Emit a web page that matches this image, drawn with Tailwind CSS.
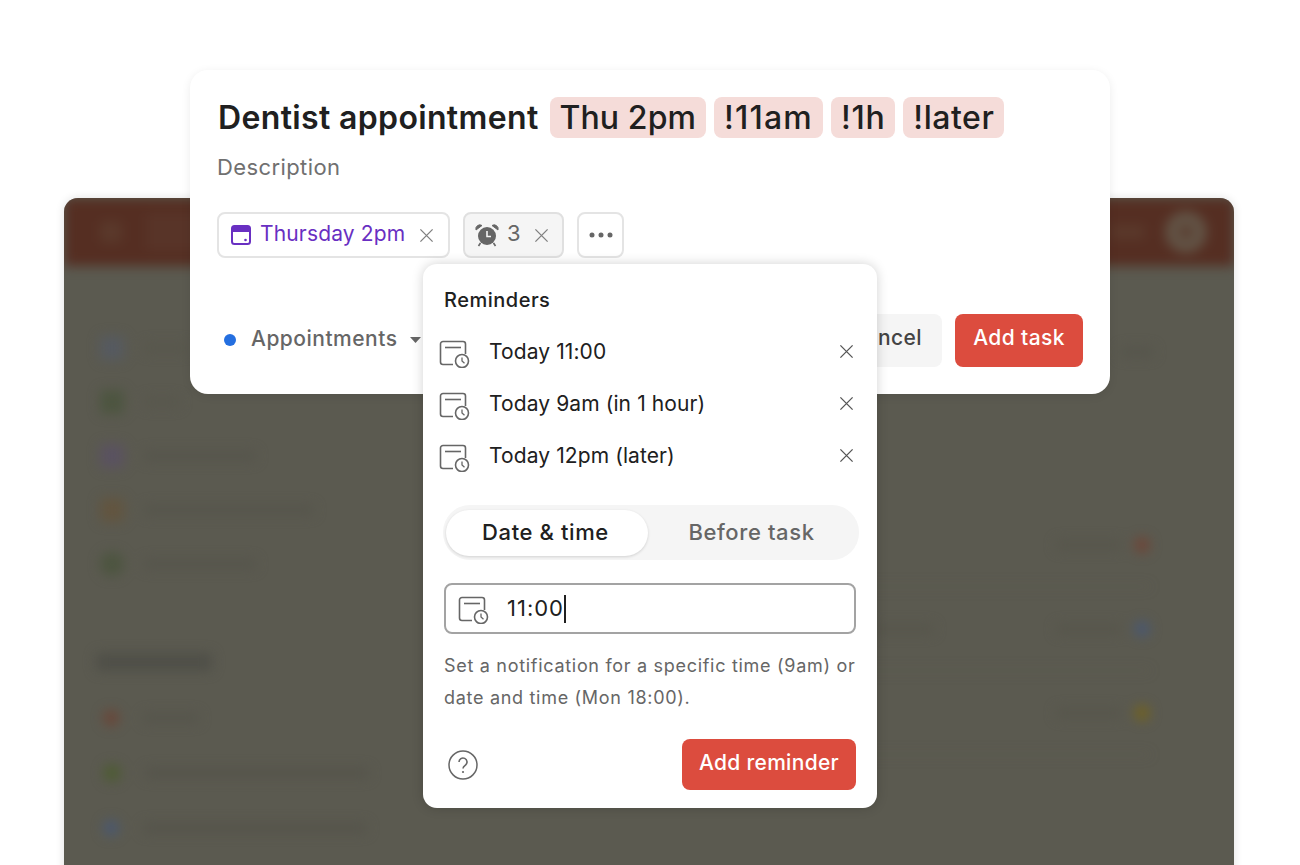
<!DOCTYPE html>
<html lang="en">
<head>
    <meta charset="UTF-8">
    <title>Reminders</title>
    <script src="https://cdn.jsdelivr.net/npm/@tailwindcss/browser@4"></script>
</head>
<body class="bg-white font-['Inter',sans-serif]">
    <svg class="hidden">
        <symbol id="cal-clock" viewBox="0 0 32 28">
            <path d="M14 24.500H4a2.500 2.500 0 0 1-2.500-2.500V4A2.500 2.500 0 0 1 4 1.500h20A2.500 2.500 0 0 1 26.500 4v10" fill="none" stroke="#666" stroke-width="1.600"/>
            <path d="M6 7.500h16" fill="none" stroke="#666" stroke-width="1.600"/>
            <circle cx="23" cy="21" r="6.500" fill="none" stroke="#666" stroke-width="1.600"/>
            <path d="M23 17.500V21l2.500 2.200" fill="none" stroke="#666" stroke-width="1.300"/>
        </symbol>
        <symbol id="close" viewBox="0 0 16 16">
            <path d="M1.500 1.500l13 13M14.500 1.500l-13 13" fill="none" stroke="currentColor" stroke-width="1.400"/>
        </symbol>
    </svg>

    <div class="relative h-[865px] w-[1300px] overflow-hidden">
        <!-- Blurred app window behind the dialog -->
        <div class="absolute left-[64px] top-[198px] h-[700px] w-[1170px] overflow-hidden rounded-t-[14px] bg-[#5b5a50] shadow-[0_0_10px_rgba(0,0,0,0.12)]">
            <div class="flex h-full flex-col blur-[6px]">
                <div class="flex h-[68px] shrink-0 items-center justify-between bg-[#552e22] pl-[36px] pr-[27px]">
                    <div class="flex items-center gap-[24px]">
                        <div class="size-[22px] rounded bg-[#5a392b]"></div>
                        <div class="h-[38px] w-[60px] rounded bg-[#583428]"></div>
                    </div>
                    <div class="flex items-center gap-[20px]">
                        <div class="h-[14px] w-[34px] rounded bg-[#5a392b]"></div>
                        <div class="flex size-[42px] items-center justify-center rounded-full bg-[#625345]">
                            <div class="size-[12px] rounded-full bg-[#58392c]"></div>
                        </div>
                    </div>
                </div>
                <div class="flex flex-1">
                    <div class="flex w-[320px] flex-col pl-[36px] pt-[55px]">
                        <div class="flex h-[54px] items-center gap-[20px]">
                            <div class="size-[24px] rounded bg-[#565a60]"></div>
                            <div class="h-[10px] w-[44px] rounded bg-[#58574d]"></div>
                        </div>
                        <div class="flex h-[54px] items-center gap-[20px]">
                            <div class="size-[24px] rounded bg-[#4d5540]"></div>
                            <div class="h-[10px] w-[36px] rounded bg-[#58574d]"></div>
                        </div>
                        <div class="flex h-[54px] items-center gap-[20px]">
                            <div class="size-[24px] rounded bg-[#5a5260]"></div>
                            <div class="h-[10px] w-[112px] rounded bg-[#56554c]"></div>
                        </div>
                        <div class="flex h-[54px] items-center gap-[20px]">
                            <div class="size-[24px] rounded bg-[#625540]"></div>
                            <div class="h-[10px] w-[170px] rounded bg-[#56554c]"></div>
                        </div>
                        <div class="flex h-[54px] items-center gap-[20px]">
                            <div class="size-[24px] rounded-full bg-[#4d5540]"></div>
                            <div class="h-[10px] w-[112px] rounded bg-[#56554c]"></div>
                        </div>
                        <div class="ml-[-4px] mt-[62px] h-[18px] w-[116px] rounded bg-[#4f4f48]"></div>
                        <div class="mt-[19px] flex h-[55px] items-center gap-[24px] pl-[3px]">
                            <div class="size-[16px] rounded-full bg-[#6a4638]"></div>
                            <div class="h-[10px] w-[56px] rounded bg-[#56554c]"></div>
                        </div>
                        <div class="flex h-[55px] items-center gap-[24px] pl-[3px]">
                            <div class="size-[18px] rounded-full bg-[#4e5b34]"></div>
                            <div class="h-[10px] w-[224px] rounded bg-[#55544b]"></div>
                        </div>
                        <div class="flex h-[55px] items-center gap-[24px] pl-[3px]">
                            <div class="size-[16px] rounded-full bg-[#4a5870]"></div>
                            <div class="h-[10px] w-[224px] rounded bg-[#55544b]"></div>
                        </div>
                    </div>
                    <div class="flex flex-1 flex-col items-end pr-[84px] pt-[81px]">
                        <div class="mr-[-4px] h-[10px] w-[34px] rounded bg-[#56554c]"></div>
                        <div class="mt-[146px] flex h-[84px] w-[400px] items-center justify-end gap-[12px] border-b border-[#5d5a50]">
                            <div class="h-[10px] w-[66px] rounded bg-[#57564c]"></div>
                            <div class="size-[16px] rounded-full bg-[#6e4638]"></div>
                        </div>
                        <div class="flex h-[84px] w-[400px] items-center justify-end gap-[12px] border-b border-[#5d5a50]">
                            <div class="mr-[110px] h-[10px] w-[60px] rounded bg-[#57564c]"></div>
                            <div class="h-[10px] w-[66px] rounded bg-[#57564c]"></div>
                            <div class="size-[16px] rounded-full bg-[#4a5870]"></div>
                        </div>
                        <div class="flex h-[84px] w-[400px] items-center justify-end gap-[12px] border-b border-[#5d5a50]">
                            <div class="h-[10px] w-[66px] rounded bg-[#57564c]"></div>
                            <div class="size-[16px] rounded-full bg-[#706224]"></div>
                        </div>
                    </div>
                </div>
            </div>
        </div>

        <!-- Add task dialog -->
        <div class="absolute left-[190px] top-[70px] flex h-[324px] w-[920px] flex-col rounded-[18px] bg-white px-[27px] pt-[27px] shadow-[0_2px_10px_rgba(0,0,0,0.08)]">
            <div class="flex h-[41px] items-center gap-[8px] text-[32px] font-medium text-[#202020]">
                <span class="ml-[1px] mr-[3px] font-semibold tracking-[0.35px]">Dentist appointment</span>
                <span class="rounded-[8px] bg-[#f5dcd9] px-[10px] leading-[41px] tracking-[0.1px]">Thu 2pm</span>
                <span class="rounded-[8px] bg-[#f5dcd9] px-[10px] leading-[41px] tracking-[1.2px]">!11am</span>
                <span class="rounded-[8px] bg-[#f5dcd9] px-[10px] leading-[41px] tracking-[0.7px]">!1h</span>
                <span class="rounded-[8px] bg-[#f5dcd9] px-[10px] leading-[41px] tracking-[0.55px]">!later</span>
            </div>
            <div class="mt-[15px] text-[22px] leading-[28px] tracking-[0.4px] text-[#707070]">Description</div>
            <div class="mt-[31px] flex items-center gap-[13px]">
                <div class="flex h-[46px] w-[233px] items-center rounded-[8px] border-2 border-[#e4e4e4] pl-[12px]">
                    <svg class="size-[20px]" viewBox="0 0 20 20">
                        <rect x="1" y="1" width="18" height="18" rx="2.500" fill="none" stroke="#692fc2" stroke-width="2"/>
                        <rect x="1" y="1" width="18" height="6" rx="1" fill="#692fc2"/>
                        <circle cx="14.500" cy="15" r="1.300" fill="#692fc2"/>
                    </svg>
                    <span class="ml-[9px] pb-[3px] text-[21px] tracking-[0.15px] text-[#692fc2]">Thursday 2pm</span>
                    <svg class="ml-[14px] size-[15px] text-[#808080]"><use href="#close"/></svg>
                </div>
                <div class="flex h-[46px] w-[101px] items-center rounded-[8px] border-2 border-[#e0e0e0] bg-[#f5f5f5] pl-[10px]">
                    <svg class="size-[24px]" viewBox="0 0 24 24">
                        <circle cx="12" cy="13" r="9" fill="#666"/>
                        <path d="M12 8v5.500h4" fill="none" stroke="#f5f5f5" stroke-width="1.600"/>
                        <path d="M1 7a4 4 0 0 1 6-4.500zM23 7a4 4 0 0 0-6-4.500z" fill="#666" stroke="#666"/>
                        <path d="M5.500 20l-2 3M18.500 20l2 3" stroke="#666" stroke-width="1.600"/>
                    </svg>
                    <span class="ml-[8px] pb-[3px] text-[22px] text-[#666]">3</span>
                    <svg class="ml-[13px] size-[15px] text-[#808080]"><use href="#close"/></svg>
                </div>
                <div class="flex h-[46px] w-[47px] items-center justify-center rounded-[8px] border-2 border-[#e4e4e4]">
                    <svg class="h-[6px] w-[24px]" viewBox="0 0 24 6">
                        <circle cx="3" cy="3" r="2.500" fill="#666"/>
                        <circle cx="12" cy="3" r="2.500" fill="#666"/>
                        <circle cx="21" cy="3" r="2.500" fill="#666"/>
                    </svg>
                </div>
            </div>
            <div class="mt-[56px] flex items-center justify-between">
                <div class="flex items-center pl-[7px]">
                    <span class="mb-[2px] size-[12px] rounded-full bg-[#246fe0]"></span>
                    <span class="ml-[15px] pb-[4px] text-[21px] font-medium tracking-[0.5px] text-[#666]">Appointments</span>
                    <svg class="mb-[2px] ml-[12px] h-[6px] w-[11px]" viewBox="0 0 11 6"><path d="M0 0h11L5.500 6z" fill="#666"/></svg>
                </div>
                <div class="flex gap-[13px] text-[21px] font-medium tracking-[0.4px]">
                    <button class="h-[53px] w-[104px] rounded-[8px] bg-[#f5f5f5] pb-[5px] pr-[8px] text-[#444]">Cancel</button>
                    <button class="h-[53px] w-[128px] rounded-[8px] bg-[#dc4c3e] pb-[6px] text-white">Add task</button>
                </div>
            </div>
        </div>

        <!-- Reminders popup -->
        <div class="absolute left-[423px] top-[264px] flex h-[544px] w-[454px] flex-col rounded-[14px] bg-white pl-[16px] pr-[21px] shadow-[0_0_12px_rgba(0,0,0,0.18)]">
            <div class="ml-[5px] mt-[22px] text-[20px] font-medium leading-[28px] tracking-[0.5px] text-[#202020]">Reminders</div>
            <div class="mt-[12px] flex flex-col">
                <div class="flex h-[52px] items-center justify-between pr-[2px]">
                    <div class="flex items-center">
                        <svg class="mt-[3px] h-[28px] w-[32px]"><use href="#cal-clock"/></svg>
                        <span class="ml-[18px] text-[21px] tracking-[0.1px] text-[#202020]">Today 11:00</span>
                    </div>
                    <svg class="mb-[2px] size-[15px] text-[#555]"><use href="#close"/></svg>
                </div>
                <div class="flex h-[52px] items-center justify-between pr-[2px]">
                    <div class="flex items-center">
                        <svg class="mt-[3px] h-[28px] w-[32px]"><use href="#cal-clock"/></svg>
                        <span class="ml-[18px] text-[21px] tracking-[0.1px] text-[#202020]">Today 9am (in 1 hour)</span>
                    </div>
                    <svg class="mb-[2px] size-[15px] text-[#555]"><use href="#close"/></svg>
                </div>
                <div class="flex h-[52px] items-center justify-between pr-[2px]">
                    <div class="flex items-center">
                        <svg class="mt-[3px] h-[28px] w-[32px]"><use href="#cal-clock"/></svg>
                        <span class="ml-[18px] text-[21px] tracking-[0.1px] text-[#202020]">Today 12pm (later)</span>
                    </div>
                    <svg class="mb-[2px] size-[15px] text-[#555]"><use href="#close"/></svg>
                </div>
            </div>
            <div class="ml-[4px] mt-[23px] flex h-[55px] w-[416px] items-center rounded-[27px] bg-[#f5f5f5] pl-[3px] text-[22px] font-medium tracking-[0.6px]">
                <div class="flex h-[46px] w-[202px] items-center justify-center rounded-[23px] bg-white pr-[3px] text-[#202020] shadow-[0_1px_3px_rgba(0,0,0,0.15)]">Date &amp; time</div>
                <div class="flex-1 pr-[4px] text-center text-[#666]">Before task</div>
            </div>
            <div class="ml-[5px] mt-[23px] flex h-[51px] w-[412px] items-center rounded-[8px] border-2 border-[#a3a3a3] pl-[12px]">
                <svg class="mt-[3px] h-[28px] w-[32px]"><use href="#cal-clock"/></svg>
                <span class="ml-[17px] text-[22px] tracking-[1px] text-[#202020]">11:00</span>
                <span class="h-[28px] w-[1.500px] bg-[#202020]"></span>
            </div>
            <p class="ml-[5px] mt-[16px] w-[420px] text-[18px] leading-[32px] tracking-[0.7px] text-[#666]">Set a notification for a specific time (9am) or date and time (Mon 18:00).</p>
            <div class="ml-[9px] mt-[25px] flex items-center justify-between">
                <svg class="size-[30px]" viewBox="0 0 30 30">
                    <circle cx="15" cy="15" r="14" fill="none" stroke="#666" stroke-width="1.500"/>
                    <path d="M11 12a4 4 0 1 1 6.500 3.100c-1.500 1.100-2.500 1.800-2.500 3.400" fill="none" stroke="#666" stroke-width="1.600"/>
                    <circle cx="15" cy="22" r="1.100" fill="#666"/>
                </svg>
                <button class="h-[51px] w-[174px] rounded-[8px] bg-[#dc4c3e] pb-[3px] text-[21px] font-medium tracking-[0.3px] text-white">Add reminder</button>
            </div>
        </div>
    </div>
</body>
</html>
